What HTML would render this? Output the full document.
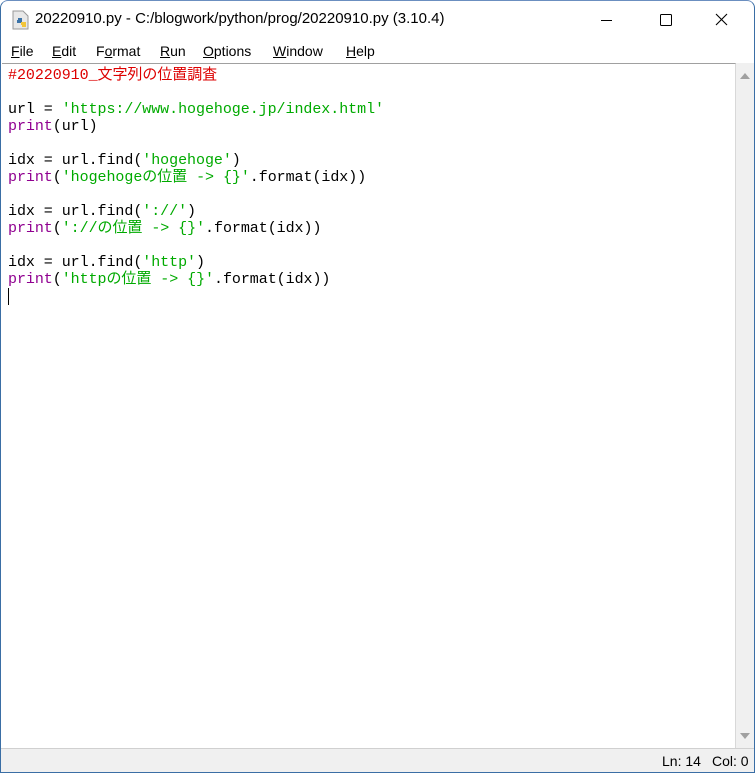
<!DOCTYPE html>
<html><head><meta charset="utf-8"><style>
*{margin:0;padding:0;box-sizing:border-box}
body{width:755px;height:773px;overflow:hidden;background:#fff;position:relative;font-family:"Segoe UI","Liberation Sans",sans-serif}
.win{position:absolute;left:0;top:0;width:755px;height:773px;border:1px solid #3a6ea5;border-top-color:#6b8fc0;border-radius:8px 8px 0 0;overflow:hidden;background:#fff}
.title{position:absolute;left:34px;top:9px;font-size:15px;color:#000;white-space:nowrap}
.menu{position:absolute;top:42px;left:0;font-size:14px;color:#000}
.menu span{position:absolute;white-space:nowrap}
.menu u{text-decoration:underline}
.text{position:absolute;left:1px;top:62px;width:734px;height:685px;border-top:1px solid #a0a0a0;border-right:1px solid #d8d8d8;background:#fff}
.code{position:absolute;left:6px;top:3px;font-family:"Liberation Mono","Noto Sans CJK JP",monospace;font-size:15px;letter-spacing:-0.05px;line-height:17px;white-space:pre;color:#000}
.r{color:#dd0000}.g{color:#00aa00}.p{color:#900090}
.sb{position:absolute;left:735px;top:62px;width:19px;height:685px;background:#f0f0f0}
.status{position:absolute;left:0;top:747px;width:755px;height:26px;background:#f0f0f0;border-top:1px solid #d0d0d0;font-size:14px}
</style></head><body><div class="win">
<svg style="position:absolute;left:11px;top:9px" width="18" height="20" viewBox="0 0 18 20"><path d="M1 1h10l5 5v13H1z" fill="#e8e8e8" stroke="#999"/><path d="M6 8h4v2H6zM5 10h5v3H5z" fill="#3b73a8"/><path d="M9 12h5v3H9zM10 15h4v2h-4z" fill="#f2c53a"/></svg>
<div class="title">20220910.py - C:/blogwork/python/prog/20220910.py (3.10.4)</div>
<svg style="position:absolute;left:600px;top:10px" width="140" height="20"><path d="M0 9.5h11" stroke="#000"/><rect x="59.5" y="3.5" width="11" height="11" rx="1" fill="none" stroke="#000"/><path d="M115 3l11 11M126 3l-11 11" stroke="#000" stroke-width="1.1"/></svg>
<div class="menu">
<span style="left:10px"><u>F</u>ile</span>
<span style="left:51px"><u>E</u>dit</span>
<span style="left:95px">F<u>o</u>rmat</span>
<span style="left:159px"><u>R</u>un</span>
<span style="left:202px"><u>O</u>ptions</span>
<span style="left:272px"><u>W</u>indow</span>
<span style="left:345px"><u>H</u>elp</span>
</div>
<div class="text"><div class="code"><span class="r">#20220910_文字列の位置調査</span>

url = <span class="g">'https://www.hogehoge.jp/index.html'</span>
<span class="p">print</span>(url)

idx = url.find(<span class="g">'hogehoge'</span>)
<span class="p">print</span>(<span class="g">'hogehogeの位置 -&gt; {}'</span>.format(idx))

idx = url.find(<span class="g">'://'</span>)
<span class="p">print</span>(<span class="g">'://の位置 -&gt; {}'</span>.format(idx))

idx = url.find(<span class="g">'http'</span>)
<span class="p">print</span>(<span class="g">'httpの位置 -&gt; {}'</span>.format(idx))
</div><div style="position:absolute;left:6px;top:224px;width:1px;height:17px;background:#000"></div></div>
<div class="sb"><svg width="19" height="685"><path d="M4 16l5-6 5 6z" fill="#a0a0a0"/><path d="M4 670l5 6 5-6z" fill="#a0a0a0"/></svg></div>
<div class="status"><span style="position:absolute;left:661px;top:4px">Ln: 14</span><span style="position:absolute;left:711px;top:4px">Col: 0</span></div>
</div></body></html>
